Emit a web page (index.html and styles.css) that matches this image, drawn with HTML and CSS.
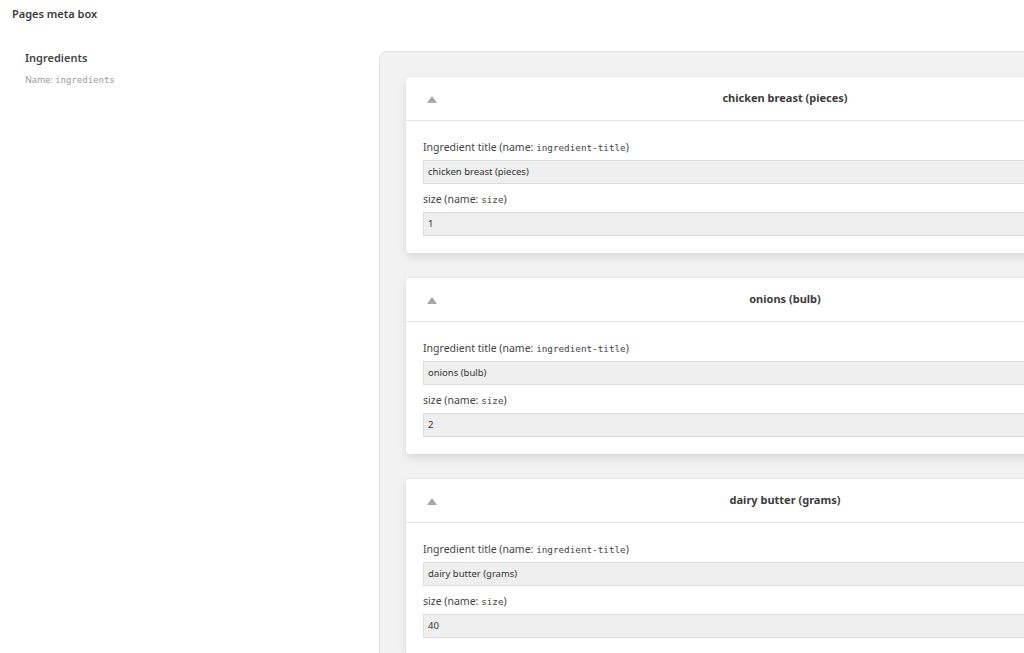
FILE: index.html
```html
<!DOCTYPE html>
<html>
<head>
<meta charset="utf-8">
<link rel="stylesheet" href="styles.css">
</head>
<body>
<div class="page">
  <h1 class="box-title">Pages meta box</h1>
  <div class="field-row">
    <div class="field-meta">
      <div class="field-label">Ingredients</div>
      <div class="field-name">Name: <code>ingredients</code></div>
    </div>
    <div class="repeater">
      <div class="card">
        <div class="card-head"><span class="toggle"></span><span class="card-title">chicken breast (pieces)</span></div>
        <div class="card-body">
          <label class="sub-label">Ingredient title (name: <code>ingredient-title</code>)</label>
          <div class="input">chicken breast (pieces)</div>
          <label class="sub-label">size (name: <code>size</code>)</label>
          <div class="input">1</div>
        </div>
      </div>
      <div class="card">
        <div class="card-head"><span class="toggle"></span><span class="card-title">onions (bulb)</span></div>
        <div class="card-body">
          <label class="sub-label">Ingredient title (name: <code>ingredient-title</code>)</label>
          <div class="input">onions (bulb)</div>
          <label class="sub-label">size (name: <code>size</code>)</label>
          <div class="input">2</div>
        </div>
      </div>
      <div class="card">
        <div class="card-head"><span class="toggle"></span><span class="card-title">dairy butter (grams)</span></div>
        <div class="card-body">
          <label class="sub-label">Ingredient title (name: <code>ingredient-title</code>)</label>
          <div class="input">dairy butter (grams)</div>
          <label class="sub-label">size (name: <code>size</code>)</label>
          <div class="input">40</div>
        </div>
      </div>
    </div>
  </div>
</div>
</body>
</html>
```
FILE: styles.css
```css
html, body {
  margin: 0;
  padding: 0;
  background: #fff;
  overflow: hidden;
}
body {
  font-family: "Noto Sans", "Open Sans", sans-serif;
  color: #3c3c3c;
  width: 1024px;
  height: 653px;
}
code {
  font-family: "DejaVu Sans Mono", "Liberation Mono", monospace;
}
.page {
  padding: 7px 0 0 12px;
}
.box-title {
  margin: 0;
  font-size: 11px;
  font-weight: 600;
  line-height: 14px;
  color: #3a3a3a;
}
.field-row {
  display: flex;
  margin-top: 30px;
}
.field-meta {
  width: 367px;
  flex: none;
  padding: 0 0 0 13px;
  box-sizing: border-box;
}
.field-label {
  font-size: 11px;
  font-weight: 600;
  color: #444;
  line-height: 14px;
}
.field-name {
  margin-top: 9px;
  font-size: 9px;
  color: #9a9a9a;
  line-height: 12px;
}
.field-name code { font-size: 9px; color: #9a9a9a; }
.repeater {
  flex: none;
  width: 758px;
  background: #f2f2f2;
  border: 1px solid #e2e2e2;
  border-radius: 7px;
  padding: 25px 26px;
  display: flex;
  flex-direction: column;
  gap: 25px;
}
.card {
  background: #fff;
  border-radius: 3px;
  box-shadow: 0 4px 8px rgba(0,0,0,0.10), 0 0 2px rgba(0,0,0,0.05);
}
.card-head {
  position: relative;
  height: 43px;
  border-bottom: 1px solid #e4e4e4;
  display: flex;
  align-items: center;
  justify-content: center;
}
.toggle {
  position: absolute;
  left: 21px;
  top: 19px;
  width: 0;
  height: 0;
  border-left: 5px solid transparent;
  border-right: 5px solid transparent;
  border-bottom: 7px solid #a8a8a8;
}
.card-title {
  font-size: 11px;
  font-weight: 700;
  color: #3c3c3c;
  margin-top: -2px;
}
.card-body {
  padding: 19px 0 17px 17px;
  display: flex;
  flex-direction: column;
}
.sub-label {
  font-size: 10.5px;
  line-height: 14px;
  color: #444;
  margin-bottom: 5px;
}
.sub-label code { font-size: 9.3px; }
.input {
  height: 22px;
  line-height: 22px;
  background: #efefef;
  border: 1px solid #dcdcdc;
  padding-left: 4px;
  font-size: 9.5px;
  color: #333;
  margin-bottom: 8px;
}
.input:last-child { margin-bottom: 0; }
```
